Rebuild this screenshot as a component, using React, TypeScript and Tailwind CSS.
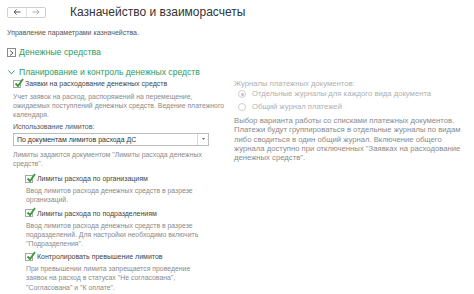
import React from "react";

const Check = () => (
  <span className="relative inline-block w-[8px] h-[8px] border border-[#a8a8a8] bg-white shrink-0">
    <svg className="absolute left-[0px] top-[-3px]" width="10" height="10" viewBox="0 0 10 10">
      <path d="M1.5 5.5 L4 8 L9 1" fill="none" stroke="#3c9a3c" strokeWidth="1.8" />
    </svg>
  </span>
);

const Radio = ({ on }: { on?: boolean }) => (
  <span className="inline-flex items-center justify-center w-[8px] h-[8px] rounded-full border border-[#cfcfcf] bg-white shrink-0">
    {on && <span className="w-[3px] h-[3px] rounded-full bg-[#c0c0c0]" />}
  </span>
);

const Desc = ({ lines, className = "" }: { lines: string[]; className?: string }) => (
  <div className={"text-[#8a8a8a] " + className}>
    {lines.map((l, i) => (
      <div key={i} className="whitespace-nowrap">{l}</div>
    ))}
  </div>
);

export default function App() {
  return (
    <div
      className="w-[474px] h-[294px] overflow-hidden bg-white text-[#333]"
      style={{ fontFamily: '"Liberation Sans", Arial, sans-serif' }}
    >
      {/* header */}
      <div className="flex items-center h-[24px] pl-[7px]">
        <div className="flex items-center h-[11px] w-[39px] border border-[#cfcfcf] rounded-[2px] bg-white">
          <div className="flex-1 flex items-center justify-center border-r border-[#e2e2e2] h-full">
            <svg width="8" height="6" viewBox="0 0 8 6"><path d="M7.5 3 H1 M3.5 0.5 L1 3 L3.5 5.5" fill="none" stroke="#555" strokeWidth="1" /></svg>
          </div>
          <div className="flex-1 flex items-center justify-center h-full">
            <svg width="8" height="6" viewBox="0 0 8 6"><path d="M0.5 3 H7 M4.5 0.5 L7 3 L4.5 5.5" fill="none" stroke="#b0b0b0" strokeWidth="1" /></svg>
          </div>
        </div>
        <div className="ml-[24px] text-[12px] text-[#333] leading-none">Казначейство и взаиморасчеты</div>
      </div>

      <div className="pl-[7px] mt-[4px] text-[7px] leading-[9px] text-[#555]">Управление параметрами казначейства.</div>

      {/* group 1 */}
      <div className="flex items-center pl-[7px] mt-[10px] h-[11px]">
        <span className="flex items-center justify-center w-[9px] h-[9px] border border-[#8a8a8a]">
          <svg width="5" height="6" viewBox="0 0 5 6"><path d="M1 0.5 L4 3 L1 5.5" fill="none" stroke="#555" strokeWidth="1" /></svg>
        </span>
        <span className="ml-[3px] text-[8.8px] leading-none text-[#2f9b63]">Денежные средства</span>
      </div>

      {/* group 2 */}
      <div className="flex items-center pl-[8px] mt-[9px] h-[11px]">
        <svg width="7" height="5" viewBox="0 0 7 5"><path d="M0.5 0.5 L3.5 3.8 L6.5 0.5" fill="none" stroke="#2f9b63" strokeWidth="1" /></svg>
        <span className="ml-[4px] text-[8.6px] leading-none text-[#2f9b63]">Планирование и контроль денежных средств</span>
      </div>

      <div className="flex mt-[1px]">
        {/* left column */}
        <div className="w-[221px] pl-[13px] text-[6.9px] leading-[9.2px]">
          <div className="flex items-center gap-[4px] h-[9px]">
            <Check />
            <span className="text-[7px] leading-none text-[#444]">Заявки на расходование денежных средств</span>
          </div>
          <Desc
            className="mt-[4px]"
            lines={[
              "Учет заявок на расход, распоряжений на перемещение,",
              "ожидаемых поступлений денежных средств. Ведение платежного",
              "календаря.",
            ]}
          />
          <div className="mt-[2px] text-[7px] text-[#555]">Использование лимитов:</div>
          <div className="flex items-center w-[196px] h-[13px] mt-[2px] border border-[#bdbdbd] bg-white">
            <span className="flex-1 pl-[3px] text-[7px] leading-none text-[#333]">По документам лимитов расхода ДС</span>
            <span className="w-[11px] h-full border-l border-[#d6d6d6] flex items-center justify-center">
              <svg width="3" height="2" viewBox="0 0 3 2"><path d="M0 0 H3 L1.5 2 Z" fill="#666" /></svg>
            </span>
          </div>
          <Desc
            className="mt-[4px]"
            lines={['Лимиты задаются документом "Лимиты расхода денежных', 'средств".']}
          />
          <div className="pl-[12px]">
            <div className="flex items-center gap-[4px] h-[9px] mt-[6px]">
              <Check />
              <span className="text-[7px] leading-none text-[#444]">Лимиты расхода по организациям</span>
            </div>
            <Desc className="mt-[3px] pl-[1px]" lines={["Ввод лимитов расхода денежных средств в разрезе", "организаций."]} />
            <div className="flex items-center gap-[4px] h-[9px] mt-[4px]">
              <Check />
              <span className="text-[7px] leading-none text-[#444]">Лимиты расхода по подразделениям</span>
            </div>
            <Desc
              className="mt-[3px] pl-[1px]"
              lines={[
                "Ввод лимитов расхода денежных средств в разрезе",
                "подразделений. Для настройки необходимо включить",
                '"Подразделения".',
              ]}
            />
            <div className="flex items-center gap-[4px] h-[9px] mt-[4px]">
              <Check />
              <span className="text-[7px] leading-none text-[#444]">Контролировать превышение лимитов</span>
            </div>
            <Desc
              className="mt-[3px] pl-[1px]"
              lines={[
                "При превышении лимита запрещается проведение",
                'заявок на расход в статусах "Не согласована",',
                '"Согласована" и "К оплате".',
              ]}
            />
          </div>
        </div>

        {/* right column */}
        <div className="pl-[13px] flex-1 text-[7.7px]">
          <div className="mt-[0px] leading-[9px] text-[#b0b0b0]">Журналы платежных документов:</div>
          <div className="flex items-center gap-[6px] h-[10px] mt-[1px] pl-[4px]">
            <Radio on />
            <span className="leading-none text-[#b0b0b0]">Отдельные журналы для каждого вида документа</span>
          </div>
          <div className="flex items-center gap-[6px] h-[10px] mt-[3px] pl-[4px]">
            <Radio />
            <span className="leading-none text-[#b0b0b0]">Общий журнал платежей</span>
          </div>
          <Desc
            className="mt-[4px] leading-[9.3px]"
            lines={[
              "Выбор варианта работы со списками платежных документов.",
              "Платежи будут группироваться в отдельные журналы по видам",
              "либо сводиться в один общий журнал. Включение общего",
              'журнала доступно при отключенных "Заявках на расходование',
              'денежных средств".',
            ]}
          />
        </div>
      </div>
    </div>
  );
}
